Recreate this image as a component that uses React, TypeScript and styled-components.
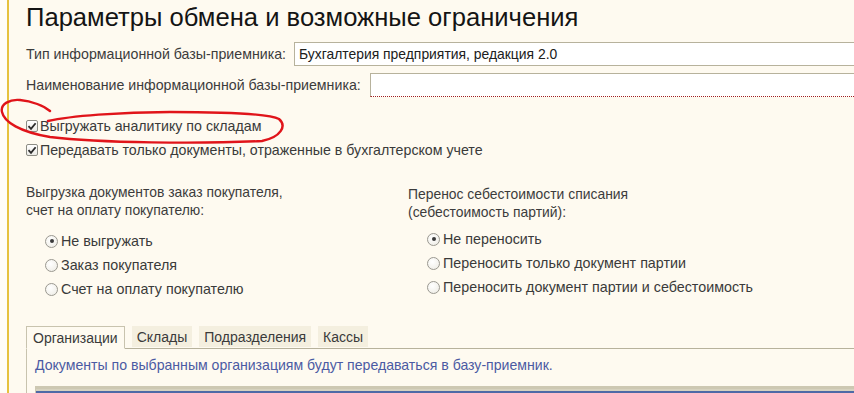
import React from 'react';
import styled, { createGlobalStyle } from 'styled-components';

const GlobalStyle = createGlobalStyle`
  html, body {
    margin: 0;
    padding: 0;
    background: #fefaf0;
    overflow: hidden;
  }
  * { box-sizing: border-box; }
`;

const Page = styled.div`
  position: relative;
  display: flex;
  width: 854px;
  height: 393px;
  overflow: hidden;
  font-family: "Liberation Sans", Arial, sans-serif;
  color: #3a3a3a;
`;

const Gutter = styled.div`
  width: 7px;
  background: #fffdf7;
`;

const Rule = styled.div`
  width: 2px;
  background: #e6c23e;
`;

const Content = styled.div`
  flex: 1;
  display: flex;
  flex-direction: column;
  padding-left: 17px;
  background: #fefaf0;
`;

const Title = styled.h1`
  margin: 2px 0 0 0;
  font-size: 25.6px;
  line-height: 31px;
  font-weight: normal;
  color: #141414;
`;

const Fields = styled.div`
  display: flex;
  flex-direction: column;
  gap: 7px;
  margin-top: 9px;
`;

const FieldRow = styled.div<{ $labelWidth: number }>`
  display: grid;
  grid-template-columns: ${({ $labelWidth }) => $labelWidth}px 1fr;
  align-items: center;
  height: 24px;
`;

const Label = styled.span`
  font-size: 14.2px;
  color: #3c3c3c;
  white-space: nowrap;
`;

const Input = styled.div<{ $required?: boolean }>`
  height: 24px;
  margin-right: -4px;
  background: #ffffff;
  border: 1px solid #b7b29c;
  border-bottom: ${({ $required }) => ($required ? '1px dotted #a02020' : '1px solid #b7b29c')};
  padding: 3px 4px;
  font-size: 13.9px;
  color: #202020;
  white-space: nowrap;
`;

const Checks = styled.div`
  display: flex;
  flex-direction: column;
  margin-top: 17px;
`;

const CheckRow = styled.label`
  display: flex;
  align-items: center;
  gap: 2px;
  height: 24px;
  font-size: 14.2px;
  color: #3a3a3a;
`;

const Box = styled.span`
  display: inline-flex;
  align-items: center;
  justify-content: center;
  width: 12px;
  height: 12px;
  border: 1px solid #8c8c84;
  border-radius: 2px;
  background: linear-gradient(#ffffff, #ecebe6);
`;

const Columns = styled.div`
  display: grid;
  grid-template-columns: 382px 1fr;
  margin-top: 21px;
`;

const Group = styled.div<{ $shift: number }>`
  display: flex;
  flex-direction: column;
  margin-top: ${({ $shift }) => $shift}px;
`;

const GroupTitle = styled.div`
  font-size: 13.9px;
  line-height: 18px;
  color: #3c3c3c;
`;

const Radios = styled.div<{ $gap: number }>`
  display: flex;
  flex-direction: column;
  margin-top: ${({ $gap }) => $gap}px;
  padding-left: 19px;
`;

const RadioRow = styled.label`
  display: flex;
  align-items: center;
  gap: 3px;
  height: 24px;
  font-size: 14.3px;
  color: #3a3a3a;
`;

const Circle = styled.span<{ $on?: boolean }>`
  position: relative;
  width: 13px;
  height: 13px;
  border-radius: 50%;
  border: 1px solid #9a9890;
  background: radial-gradient(circle at 40% 35%, #ffffff, #eceae2);

  &::after {
    content: '';
    display: ${({ $on }) => ($on ? 'block' : 'none')};
    position: absolute;
    left: 3.5px;
    top: 3.5px;
    width: 4px;
    height: 4px;
    border-radius: 50%;
    background: #3a3a3a;
  }
`;

const TabStrip = styled.div`
  display: flex;
  align-items: flex-end;
  gap: 7px;
  margin-top: 26px;
  height: 22px;
  border-bottom: 1px solid #b7b29c;
`;

const Tab = styled.div<{ $active?: boolean }>`
  height: ${({ $active }) => ($active ? '23px' : '21px')};
  margin-bottom: ${({ $active }) => ($active ? '-1px' : '1px')};
  padding: 0 ${({ $active }) => ($active ? '6px' : '4px')};
  display: flex;
  align-items: center;
  font-size: 14px;
  color: #3a3a3a;
  background: ${({ $active }) => ($active ? '#fefaf0' : '#f4efdf')};
  border: ${({ $active }) => ($active ? '1px solid #c8c3ae' : '1px solid transparent')};
  border-bottom: ${({ $active }) => ($active ? '1px solid #fefaf0' : '1px solid transparent')};
`;

const Panel = styled.div`
  flex: 1;
  border-left: 1px solid #c8c3ae;
  padding-left: 8px;
  display: flex;
  flex-direction: column;
`;

const Note = styled.div`
  margin-top: 7px;
  font-size: 14.1px;
  line-height: 18px;
  color: #4b5aa3;
`;

const Table = styled.div`
  margin-top: 12px;
  height: 20px;
  border-top: 3px solid #cdc8b2;
  border-left: 1px solid #cdc8b2;
  background: #d6d2bf;
  padding-top: 2px;

  &::after {
    content: '';
    display: block;
    height: 100%;
    background: #4e6aa6;
  }
`;

const Annotation = styled.svg`
  position: absolute;
  left: 0;
  top: 0;
  pointer-events: none;
`;

const Check = () => (
  <Box>
    <svg width="10" height="10" viewBox="0 0 10 10">
      <path d="M1.5 5.2 L4 7.8 L8.6 2.2" fill="none" stroke="#2a2a2a" strokeWidth="1.8" />
    </svg>
  </Box>
);

const left = ['Не выгружать', 'Заказ покупателя', 'Счет на оплату покупателю'];
const right = ['Не переносить', 'Переносить только документ партии', 'Переносить документ партии и себестоимость'];

export default function App() {
  return (
    <>
      <GlobalStyle />
      <Page>
        <Gutter />
        <Rule />
        <Content>
          <Title>Параметры обмена и возможные ограничения</Title>

          <Fields>
            <FieldRow $labelWidth={268}>
              <Label>Тип информационной базы-приемника:</Label>
              <Input>Бухгалтерия предприятия, редакция 2.0</Input>
            </FieldRow>
            <FieldRow $labelWidth={344}>
              <Label>Наименование информационной базы-приемника:</Label>
              <Input $required />
            </FieldRow>
          </Fields>

          <Checks>
            <CheckRow>
              <Check />
              Выгружать аналитику по складам
            </CheckRow>
            <CheckRow>
              <Check />
              Передавать только документы, отраженные в бухгалтерском учете
            </CheckRow>
          </Checks>

          <Columns>
            <Group $shift={0}>
              <GroupTitle>
                Выгрузка документов заказ покупателя,
                <br />
                счет на оплату покупателю:
              </GroupTitle>
              <Radios $gap={10}>
                {left.map((t, i) => (
                  <RadioRow key={t}>
                    <Circle $on={i === 0} />
                    {t}
                  </RadioRow>
                ))}
              </Radios>
            </Group>
            <Group $shift={2}>
              <GroupTitle>
                Перенос себестоимости списания
                <br />
                (себестоимость партий):
              </GroupTitle>
              <Radios $gap={6}>
                {right.map((t, i) => (
                  <RadioRow key={t}>
                    <Circle $on={i === 0} />
                    {t}
                  </RadioRow>
                ))}
              </Radios>
            </Group>
          </Columns>

          <TabStrip>
            <Tab $active>Организации</Tab>
            <Tab>Склады</Tab>
            <Tab>Подразделения</Tab>
            <Tab>Кассы</Tab>
          </TabStrip>
          <Panel>
            <Note>Документы по выбранным организациям будут передаваться в базу-приемник.</Note>
            <Table />
          </Panel>
        </Content>

        <Annotation width="300" height="150" viewBox="0 0 300 150">
          <path
            d="M48 121 C 70 116, 120 112, 170 112 C 220 112, 268 113, 279 119 C 287 126, 281 137, 262 141 C 200 144, 100 143, 50 137 C 20 132, 4 122, 2 112 C 0 104, 10 99, 20 100 C 32 101, 44 106, 50 111"
            fill="none"
            stroke="#e0141a"
            strokeWidth="2.4"
            strokeLinecap="round"
          />
        </Annotation>
      </Page>
    </>
  );
}
